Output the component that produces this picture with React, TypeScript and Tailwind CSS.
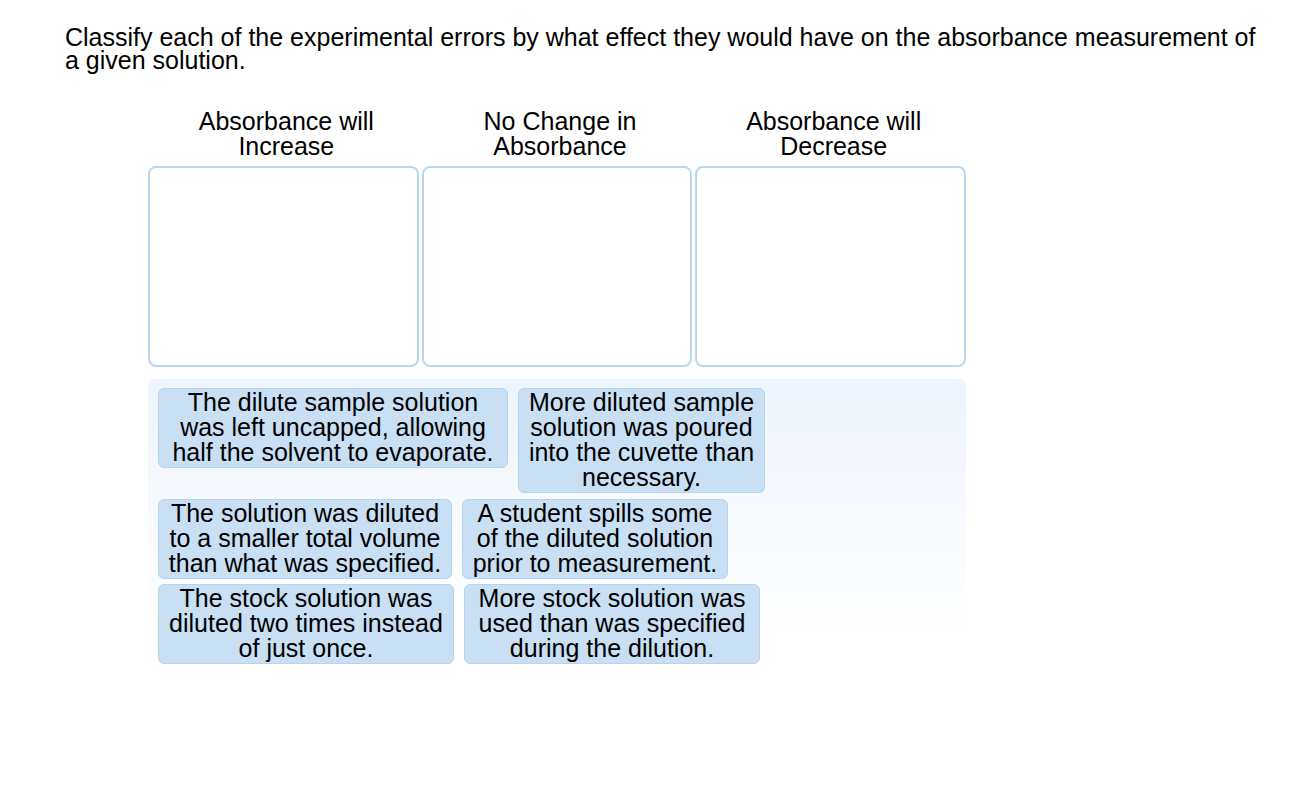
import React from "react";

type Bin = { id: string; label: [string, string] };
type Item = { id: string; lines: string[]; width: string };

const BINS: Bin[] = [
  { id: "up", label: ["Absorbance will", "Increase"] },
  { id: "same", label: ["No Change in", "Absorbance"] },
  { id: "down", label: ["Absorbance will", "Decrease"] },
];

// items waiting in the tray, grouped by the row they sit in
const ROWS: Item[][] = [
  [
    {
      id: "uncapped",
      lines: ["The dilute sample solution", "was left uncapped, allowing", "half the solvent to evaporate."],
      width: "w-[350px]",
    },
    {
      id: "poured",
      lines: ["More diluted sample", "solution was poured", "into the cuvette than", "necessary."],
      width: "w-[247px]",
    },
  ],
  [
    {
      id: "smaller",
      lines: ["The solution was diluted", "to a smaller total volume", "than what was specified."],
      width: "w-[294px]",
    },
    {
      id: "spill",
      lines: ["A student spills some", "of the diluted solution", "prior to measurement."],
      width: "w-[266px]",
    },
  ],
  [
    {
      id: "twice",
      lines: ["The stock solution was", "diluted two times instead", "of just once."],
      width: "w-[296px]",
    },
    {
      id: "morestock",
      lines: ["More stock solution was", "used than was specified", "during the dilution."],
      width: "w-[296px]",
    },
  ],
];

const Card = ({ item }: { item: Item }) => (
  <div
    className={`${item.width} shrink-0 rounded-[6px] border border-[#b6d3ef] bg-[#c8dff4] px-2 pt-[1px] pb-[2px] text-center text-[25px] leading-[25px] text-black`}
  >
    {item.lines.map((l) => (
      <div key={l} className="whitespace-nowrap">
        {l}
      </div>
    ))}
  </div>
);

export default function App() {
  return (
    <div
      className="min-h-[800px] w-full bg-white text-black"
      style={{ fontFamily: '"Liberation Sans", Arial, sans-serif' }}
    >
      <div className="pl-[65px] pr-6 pt-[26px]">
        <p className="whitespace-nowrap text-[25px] leading-[23px]">
          Classify each of the experimental errors by what effect they would have on the absorbance measurement of
          <br />a given solution.
        </p>

        <div className="ml-[83px] mt-[37px] w-[818px]">
          <div className="flex gap-[3px]">
            {BINS.map((b) => (
              <div key={b.id} className="flex w-[271px] flex-col">
                <div className="pl-[6px] text-center text-[25px] leading-[25px]">
                  <div>{b.label[0]}</div>
                  <div>{b.label[1]}</div>
                </div>
                <div className="mt-[7px] h-[201px] rounded-[8px] border-2 border-[#bad7f2] bg-white" />
              </div>
            ))}
          </div>

          <div className="mt-[12px] h-[265px] rounded-[6px] bg-gradient-to-b from-[#eef4fc] to-white px-[10px] pt-[9px]">
            <div className="flex flex-col gap-[6px]">
              <div className="flex items-start gap-[10px]">
                {ROWS[0].map((it) => (
                  <Card key={it.id} item={it} />
                ))}
              </div>
              <div className="flex items-start gap-[10px]">
                {ROWS[1].map((it) => (
                  <Card key={it.id} item={it} />
                ))}
              </div>
              <div className="-mt-[1px] flex items-start gap-[10px]">
                {ROWS[2].map((it) => (
                  <Card key={it.id} item={it} />
                ))}
              </div>
            </div>
          </div>
        </div>
      </div>
    </div>
  );
}
